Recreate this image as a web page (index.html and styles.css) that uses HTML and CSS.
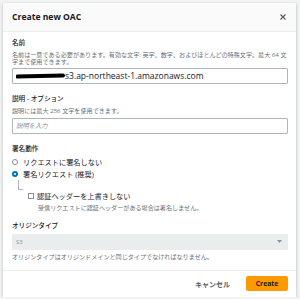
FILE: index.html
```html
<!DOCTYPE html>
<html lang="ja">
<head>
    <meta charset="UTF-8">
    <title>Create new OAC</title>
    <link rel="stylesheet" href="styles.css">
</head>
<body>
    <div class="modal">
        <div class="modal-header">
            <h2>Create new OAC</h2>
            <svg class="close" width="6" height="6" viewBox="0 0 6 6">
                <path d="M0.5 0.5 L5.5 5.5 M5.5 0.5 L0.5 5.5" stroke="#545b64" stroke-width="1.1"/>
            </svg>
        </div>

        <div class="modal-body">
            <div class="field">
                <div class="label">名前</div>
                <div class="hint">名前は一意である必要があります。有効な文字: 英字、数字、およびほとんどの特殊文字。最大 64 文字まで使用できます。</div>
                <div class="input"><span class="redacted"></span>s3.ap-northeast-1.amazonaws.com</div>
            </div>

            <div class="field">
                <div class="label">説明 - オプション</div>
                <div class="hint">説明には最大 256 文字を使用できます。</div>
                <div class="input placeholder">説明を入力</div>
            </div>

            <div class="field">
                <div class="label">署名動作</div>
                <div class="radio"><span class="dot"></span>リクエストに署名しない</div>
                <div class="radio"><span class="dot checked"></span>署名リクエスト (推奨)</div>
                <div class="tree"></div>
                <div class="check"><span class="box"></span>認証ヘッダーを上書きしない</div>
                <div class="hint sub">受信リクエストに認証ヘッダーがある場合は署名しません。</div>
            </div>

            <div class="field">
                <div class="label">オリジンタイプ</div>
                <div class="select">S3
                    <svg width="5" height="3" viewBox="0 0 5 3"><path d="M0 0 L5 0 L2.5 3 Z" fill="#879196"/></svg>
                </div>
                <div class="hint">オリジンタイプはオリジンドメインと同じタイプでなければなりません。</div>
            </div>
        </div>

        <div class="modal-footer">
            <span class="link-btn">キャンセル</span>
            <span class="primary-btn">Create</span>
        </div>
    </div>
</body>
</html>
```

FILE: styles.css
```css
:root {
    --text-color: #16191f;
    --hint-color: #687078;
    --border-color: #aab7b8;
    --divider: #eaeded;
}

* {
    box-sizing: border-box;
    margin: 0;
    padding: 0;
}

body {
    font-family: "Open Sans", "Noto Sans CJK JP", sans-serif;
    background: #f2f3f3;
    color: var(--text-color);
}

.modal {
    margin: 3px 0 0 3px;
    width: 293px;
    height: 294px;
    background: #fff;
    box-shadow: 0 1px 3px rgba(0, 0, 0, 0.25);
    display: flex;
    flex-direction: column;
}

.modal-header {
    height: 30px;
    background: #fafafa;
    border-bottom: 1px solid var(--divider);
    display: flex;
    align-items: center;
    justify-content: space-between;
    padding: 0 10px 0 9px;
}

h2 {
    font-size: 8.6px;
    font-weight: 700;
}

.modal-body {
    flex: 1;
    padding: 6px 8px 0 9px;
}

.field {
    margin-bottom: 10px;
}

.label {
    font-size: 6.6px;
    line-height: 10px;
    font-weight: 500;
}

.hint {
    font-size: 6.1px;
    line-height: 7px;
    color: var(--hint-color);
    margin-top: 3px;
}

.input {
    margin-top: 3px;
    height: 16px;
    border: 1px solid var(--border-color);
    border-radius: 1px;
    display: flex;
    align-items: center;
    padding-left: 3px;
    font-size: 8.5px;
}

.input.placeholder {
    margin-top: 4px;
    color: #879196;
    font-style: italic;
    font-family: "Noto Sans CJK JP", sans-serif;
    font-size: 6.3px;
}

.redacted {
    width: 49px;
    height: 4px;
    background: #000;
    border-radius: 2px 3px 3px 1px;
    transform: rotate(-1deg);
}

.radio {
    height: 12px;
    display: flex;
    align-items: center;
    font-size: 7.2px;
}

.field .label + .radio {
    margin-top: 2px;
}

.dot {
    width: 6px;
    height: 6px;
    border: 1px solid #879196;
    border-radius: 50%;
    margin-right: 5px;
}

.dot.checked {
    border: 2px solid #0073bb;
    background: #fff;
}

.tree {
    margin-left: 6px;
    width: 5px;
    height: 10px;
    border-left: 1px solid var(--border-color);
    border-bottom: 1px solid var(--border-color);
}

.check {
    height: 12px;
    padding-left: 16px;
    display: flex;
    align-items: center;
    font-size: 7.2px;
}

.box {
    width: 6px;
    height: 6px;
    border: 1px solid #879196;
    margin-right: 3px;
}

.hint.sub {
    margin-top: 2px;
    padding-left: 26px;
}

.select {
    margin-top: 3px;
    height: 16px;
    background: #eaeded;
    border-radius: 1px;
    display: flex;
    align-items: center;
    justify-content: space-between;
    padding: 0 6px 0 4px;
    font-size: 6px;
    color: #879196;
}

.modal-footer {
    height: 28px;
    border-top: 1px solid var(--divider);
    display: flex;
    align-items: center;
    justify-content: flex-end;
    gap: 16px;
    padding-right: 8px;
}

.link-btn {
    font-size: 7px;
    font-weight: 700;
    color: #545b64;
}

.primary-btn {
    width: 42px;
    height: 15px;
    background: #ff9900;
    border-radius: 2px;
    display: flex;
    align-items: center;
    justify-content: center;
    font-size: 6.8px;
    font-weight: 700;
}
```
